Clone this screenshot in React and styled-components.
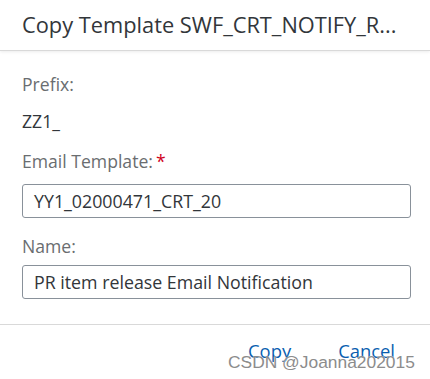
import React from "react";
import styled, { createGlobalStyle } from "styled-components";

const Global = createGlobalStyle`
  html, body { margin: 0; padding: 0; background: #fff; }
  body { font-family: "Open Sans", "Noto Sans", Arial, sans-serif; }
`;

const Dialog = styled.div`
  position: relative;
  width: 430px;
  height: 379px;
  background: #fff;
  overflow: hidden;
  display: flex;
  flex-direction: column;
`;

const Header = styled.header`
  height: 50px;
  flex: none;
  display: flex;
  align-items: center;
  padding: 0 22px;
  box-shadow: 0 1px 0 #d9d9d9, 0 2px 3px rgba(0,0,0,0.08);
  position: relative;
  z-index: 1;
`;

const Title = styled.h1`
  margin: 0;
  font-size: 21.8px;
  font-weight: 400;
  line-height: 30px;
  color: #32363a;
  white-space: nowrap;
  overflow: hidden;
`;

const Content = styled.div`
  flex: none;
  height: 274px;
  box-sizing: border-box;
  padding: 22px 19px 0 22px;
  display: flex;
  flex-direction: column;
`;

const Label = styled.div`
  font-size: 17.6px;
  color: #6a6d70;
  line-height: 24px;
  margin-top: ${p => p.$mt || 0}px;
`;

const Required = styled.span`
  color: #d0021b;
  margin-left: 3px;
`;

const Value = styled.div`
  font-size: 17.6px;
  color: #32363a;
  line-height: 24px;
  margin-top: 13px;
`;

const Input = styled.div`
  margin-top: ${p => p.$mt}px;
  height: 34px;
  box-sizing: border-box;
  border: 1px solid #89919a;
  border-radius: 3px;
  padding: 0 11px;
  display: flex;
  align-items: center;
  font-size: 17.8px;
  color: #32363a;
`;

const Footer = styled.footer`
  flex: 1;
  border-top: 1px solid #d9d9d9;
  display: flex;
  align-items: center;
  justify-content: flex-end;
  gap: 47px;
  padding: 0 35px 2px 0;
`;

const Button = styled.span`
  font-size: 18.4px;
  line-height: 24px;
  color: #0a5eaf;
`;

const Watermark = styled.div`
  position: absolute;
  left: 228px;
  top: 352px;
  font-family: "Liberation Sans", Arial, sans-serif;
  font-size: 17.4px;
  color: #8c8c8c;
  text-shadow: 0 0 1px #fff;
  white-space: nowrap;
`;

export default function App() {
  return (
    <>
      <Global />
      <Dialog>
        <Header>
          <Title>Copy Template SWF_CRT_NOTIFY_R...</Title>
        </Header>
        <Content>
          <Label>Prefix:</Label>
          <Value>ZZ1_</Value>
          <Label $mt={16}>Email Template:<Required>*</Required></Label>
          <Input $mt={11}>YY1_02000471_CRT_20</Input>
          <Label $mt={16}>Name:</Label>
          <Input $mt={7}>PR item release Email Notification</Input>
        </Content>
        <Footer>
          <Button>Copy</Button>
          <Button>Cancel</Button>
        </Footer>
        <Watermark>CSDN @Joanna202015</Watermark>
      </Dialog>
    </>
  );
}
